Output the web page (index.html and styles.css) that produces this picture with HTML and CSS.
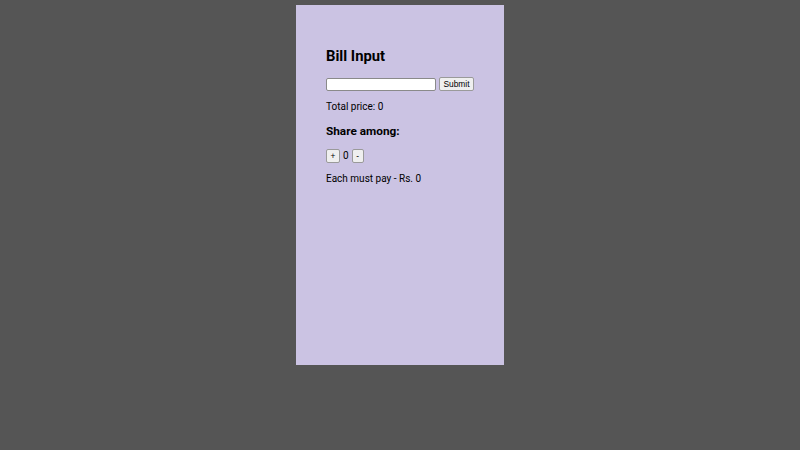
FILE: index.html
```html
<!DOCTYPE html>
<html>
<head>
<meta charset="utf-8">
<link rel="stylesheet" href="styles.css">
</head>
<body>
<div class="page">
  <div class="card">
    <h2 class="title">Bill Input</h2>
    <div class="row">
      <input class="price" type="text">
      <button class="btn">Submit</button>
    </div>
    <p class="text">Total price: 0</p>
    <h3 class="sub">Share among:</h3>
    <div class="row counter">
      <button class="btn small plus">+</button>
      <span class="count">0</span>
      <button class="btn small minus">-</button>
    </div>
    <p class="text">Each must pay - Rs. 0</p>
  </div>
</div>
</body>
</html>
```
FILE: styles.css
```css
html, body {
  margin: 0;
  padding: 0;
  background: #555555;
  height: 100%;
}
.page {
  display: flex;
  justify-content: center;
  padding-top: 5px;
}
.card {
  width: 208px;
  height: 360px;
  box-sizing: border-box;
  background: #cbc3e3;
  padding: 42px 30px 0 30px;
  font-family: Roboto, "Liberation Sans", sans-serif;
  color: #000;
}
.title {
  margin: 0;
  font-size: 14.8px;
  font-weight: 700;
  line-height: 18px;
}
.row {
  display: flex;
  align-items: center;
  gap: 3px;
  margin-top: 12px;
  height: 14px;
}
.price {
  width: 110px;
  height: 13px;
  box-sizing: border-box;
  border: 1px solid #8a8a8a;
  border-radius: 2px;
  background: #fff;
  padding: 0 2px;
  font-size: 8px;
  margin: 0;
}
.btn {
  font-family: "Liberation Sans", Arial, sans-serif;
  font-size: 8.4px;
  height: 14px;
  width: 35px;
  padding: 0;
  margin: 0;
  border: 1px solid #9a9a9a;
  border-radius: 2px;
  background: #efefef;
  color: #000;
  line-height: 12px;
}
.text {
  margin: 10px 0 0 0;
  font-size: 10px;
  line-height: 12px;
}
.sub {
  margin: 11px 0 0 0;
  font-size: 11.8px;
  font-weight: 700;
  line-height: 14px;
}
.counter {
  margin-top: 11px;
  gap: 3px;
}
.small {
  height: 14px;
}
.plus {
  width: 14px;
}
.minus {
  width: 12px;
}
.count {
  font-size: 10px;
  line-height: 12px;
}
```
